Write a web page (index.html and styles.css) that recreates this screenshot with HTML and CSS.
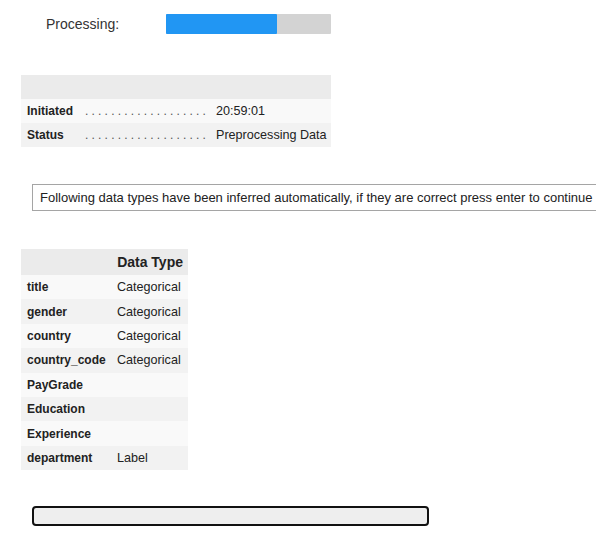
FILE: index.html
```html
<!DOCTYPE html>
<html>
<head>
<meta charset="utf-8">
<link rel="stylesheet" href="styles.css">
</head>
<body>
<div class="page">
  <div class="progress-row">
    <div class="progress-label">Processing:</div>
    <div class="progress-track"><div class="progress-fill" style="width:67%"></div></div>
  </div>

  <table class="info">
    <thead><tr><th class="c1"></th><th class="c2"></th><th class="c3"></th></tr></thead>
    <tbody>
      <tr><td class="key">Initiated</td><td class="dots">...................</td><td class="val">20:59:01</td></tr>
      <tr><td class="key">Status</td><td class="dots">...................</td><td class="val">Preprocessing Data</td></tr>
    </tbody>
  </table>

  <div class="prompt">Following data types have been inferred automatically, if they are correct press enter to continue</div>

  <table class="types">
    <thead><tr><th class="t1"></th><th class="t2">Data Type</th></tr></thead>
    <tbody>
      <tr><td class="key">title</td><td class="val">Categorical</td></tr>
      <tr><td class="key">gender</td><td class="val">Categorical</td></tr>
      <tr><td class="key">country</td><td class="val">Categorical</td></tr>
      <tr><td class="key">country_code</td><td class="val">Categorical</td></tr>
      <tr><td class="key">PayGrade</td><td class="val"></td></tr>
      <tr><td class="key">Education</td><td class="val"></td></tr>
      <tr><td class="key">Experience</td><td class="val"></td></tr>
      <tr><td class="key">department</td><td class="val">Label</td></tr>
    </tbody>
  </table>

  <div class="input-box"></div>
</div>
</body>
</html>
```

FILE: styles.css
```css
html, body {
  margin: 0;
  padding: 0;
  overflow: hidden;
  background: #fff;
}
body {
  font-family: "Liberation Sans", Arial, sans-serif;
  font-size: 12px;
  color: #222;
}
.page {
  padding-top: 14px;
}
.progress-row {
  display: flex;
  align-items: center;
  height: 20px;
  padding-left: 46px;
}
.progress-label {
  width: 120px;
  font-size: 14px;
  color: #333;
}
.progress-track {
  width: 165px;
  height: 20px;
  background: #d3d3d3;
  border-radius: 1px;
  display: flex;
}
.progress-fill {
  height: 100%;
  background: #2196f3;
  border-radius: 1px;
}

table {
  border-collapse: collapse;
  border-spacing: 0;
  table-layout: fixed;
}
td, th {
  padding: 0 6px;
  height: 24px;
  text-align: left;
  white-space: nowrap;
}
.key {
  font-weight: bold;
  font-size: 12px;
}
.val {
  font-size: 12.6px;
}

.info {
  margin-top: 41px;
  margin-left: 21px;
  width: 310px;
}
.info thead tr { background: #ebebeb; }
.info tbody tr:nth-child(odd) { background: #f9f9f9; }
.info tbody tr:nth-child(even) { background: #f2f2f2; }
.info .c1 { width: 46px; }
.info .c2 { width: 119px; }
.info .c3 { width: auto; }
.dots {
  letter-spacing: 3.2px;
  color: #555;
}

.prompt {
  margin-top: 37px;
  margin-left: 32px;
  width: max-content;
  height: 25px;
  line-height: 25px;
  padding: 0 8px 0 7px;
  border: 1px solid #a5a5a5;
  color: #222;
  font-size: 13px;
  white-space: nowrap;
}

.types {
  margin-top: 38px;
  margin-left: 21px;
  width: 167px;
}
.types thead tr { background: #ebebeb; }
.types th {
  height: 26px;
  font-size: 14px;
  font-weight: bold;
}
.types .t1 { width: 78px; }
.types .t2 { text-align: right; padding-right: 5px; padding-left: 0; }
.types td { height: 24.4px; }
.types tbody tr:nth-child(odd) { background: #f9f9f9; }
.types tbody tr:nth-child(even) { background: #f2f2f2; }

.input-box {
  margin-top: 36px;
  margin-left: 32px;
  width: 393px;
  height: 16px;
  border: 2px solid #111;
  border-radius: 4px;
  background: #eee;
}
```
